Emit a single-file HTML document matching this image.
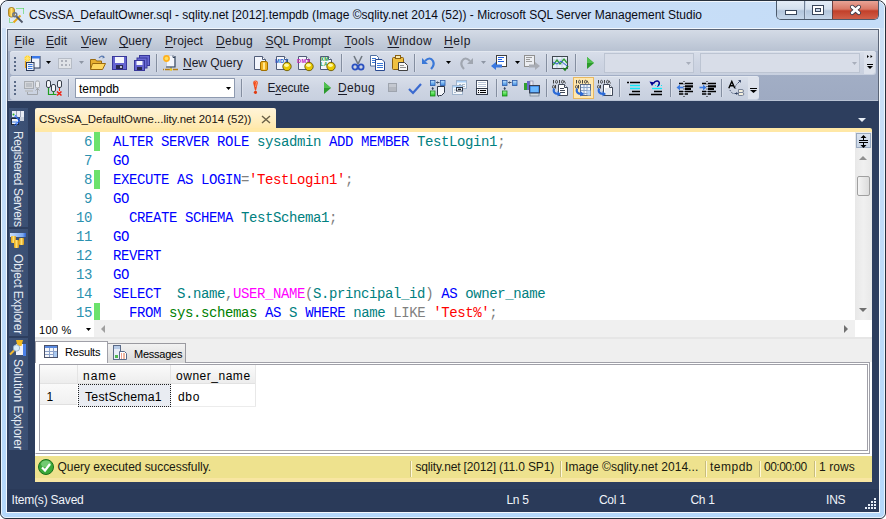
<!DOCTYPE html>
<html><head><meta charset="utf-8"><style>
*{margin:0;padding:0;box-sizing:border-box}
html,body{width:886px;height:519px;overflow:hidden;background:#fff}
body{position:relative;font-family:"Liberation Sans",sans-serif;font-size:12px;color:#000}
.a{position:absolute}
.t{position:absolute;white-space:nowrap;line-height:1}
svg{position:absolute;overflow:visible}
.navy{background-color:#2d3e5e}
.mono{font-family:"Liberation Mono",monospace}
.kw{color:#0000ff}.id{color:#008080}.op{color:#808080}.str{color:#ff0000}.fn{color:#ff00ff}.sys{color:#008000}
.ln{position:absolute;left:0;width:57px;text-align:right;color:#2b91af;font-size:14px;letter-spacing:-0.4px;line-height:19px;white-space:pre}
.cd{position:absolute;left:78px;font-size:14px;letter-spacing:-0.4px;line-height:19px;white-space:pre}
.mk{position:absolute;left:59px;width:6px;height:19px;background:#6ce26c}
.sep{position:absolute;width:1px;background:#848ea0;box-shadow:1px 0 0 rgba(240,244,250,0.35)}
.u{text-decoration:underline;text-underline-offset:2px}
.vt{position:absolute;white-space:nowrap;line-height:1;color:#e6ecf4;transform-origin:0 0;transform:rotate(90deg)}
.ssep{position:absolute;top:461px;width:2px;height:16px;border-left:1px solid #c8bc7c;border-right:1px solid #fff8d8}
</style></head><body>
<div class="a" style="left:0;top:0;width:886px;height:519px;background:#fff"></div>
<div class="a" style="left:0;top:0;width:886px;height:519px;border:1px solid #27303c;border-radius:8px 8px 6px 6px;background:linear-gradient(#d0e2f6 0,#c2dcf8 200px,#b4d8fb 519px)"></div>
<div class="a" style="left:1px;top:1px;width:884px;height:517px;border:1px solid rgba(255,255,255,0.7);border-radius:7px 7px 5px 5px"></div>
<div class="a" style="left:2px;top:2px;width:882px;height:26px;border-radius:6px 6px 0 0;background:linear-gradient(90deg,#dfeaf7 0,#d2e3f6 300px,#c8def7 600px,#c4dcf7 886px)"></div>
<div class="a" style="left:6px;top:28px;width:874px;height:485px;background:#f2f7fd"></div>
<div class="a" style="left:7px;top:29px;width:872px;height:483px;background:#5b6577"></div>
<div class="a" style="left:776px;top:1px;width:103px;height:19px;border:1px solid #4c5a6c;border-top:none;border-radius:0 0 5px 5px;overflow:hidden;background:#c8d6e8"><div class="a" style="left:0;top:0;width:28px;height:18px;background:linear-gradient(#e4edf7 0,#d3e0ee 45%,#b3c6dc 55%,#c6d7ea 100%)"></div><div class="a" style="left:27px;top:0;width:1px;height:19px;background:#6f7f94"></div><div class="a" style="left:29px;top:0;width:26px;height:18px;background:linear-gradient(#e4edf7 0,#d3e0ee 45%,#b3c6dc 55%,#c6d7ea 100%)"></div><div class="a" style="left:55px;top:0;width:1px;height:19px;background:#6f4040"></div><div class="a" style="left:56px;top:0;width:46px;height:18px;background:linear-gradient(#e8a496 0,#d97866 45%,#c2402a 55%,#d0604a 100%)"></div></div>
<svg style="left:785px;top:10px" width="12" height="5" viewBox="0 0 12 5"><rect x="0.5" y="0.5" width="11" height="4" fill="#fff" stroke="#39465a"/></svg>
<svg style="left:812px;top:5px" width="12" height="10" viewBox="0 0 12 10"><rect x="0.5" y="0.5" width="11" height="9" fill="#fff" stroke="#39465a"/><rect x="3.5" y="3.5" width="5" height="3" fill="#c8d6e8" stroke="#39465a"/></svg>
<svg style="left:850px;top:5px" width="11" height="10" viewBox="0 0 11 10"><path d="M2.2 2 L8.8 7.8 M8.8 2 L2.2 7.8" stroke="#3a3a48" stroke-width="4.4" stroke-linecap="round"/><path d="M2.2 2 L8.8 7.8 M8.8 2 L2.2 7.8" stroke="#fff" stroke-width="2.8" stroke-linecap="round"/></svg>
<svg style="left:7px;top:6px" width="18" height="18" viewBox="0 0 18 18"><defs><linearGradient id="cy" x1="0" x2="1"><stop offset="0" stop-color="#d89a10"/><stop offset="0.5" stop-color="#ffe27a"/><stop offset="1" stop-color="#d89a10"/></linearGradient></defs>
<rect x="1.5" y="1.5" width="6" height="9.5" rx="2.5" fill="url(#cy)" stroke="#a07818" stroke-width="0.8"/>
<path d="M9.5 2.5h7.5M16.5 2.5v5M2.5 12.5v4M2.5 16.5h4" stroke="#38d038" stroke-width="1" stroke-dasharray="1 1"/>
<path d="M6.5 16.5 L13.5 9.5" stroke="#e8a818" stroke-width="2"/><path d="M8.5 9.5 L15.5 16.5" stroke="#505868" stroke-width="1.8"/><circle cx="7.8" cy="8.8" r="2" fill="none" stroke="#6a7488" stroke-width="1.4"/></svg>
<div class="t" style="left:29px;top:9px;font-size:12px;color:#0a0a14;letter-spacing:-0.005px">CSvsSA_DefaultOwner.sql - sqlity.net [2012].tempdb (Image ©sqlity.net 2014 (52)) - Microsoft SQL Server Management Studio</div>
<div class="a" style="left:8px;top:30px;width:870px;height:71px;background:linear-gradient(#a8b4ca,#9eaac2)"></div>
<div class="a" style="left:8px;top:30px;width:870px;height:21px;background:linear-gradient(#d4dbe6,#b8c2d2)"></div>
<div class="a" style="left:8px;top:100px;width:870px;height:1px;background:#b8c2d4"></div>
<div class="a" style="left:10px;top:51px;width:866px;height:24px;background:linear-gradient(#d9dfea 0,#ced5e3 50%,#c8d0df 100%);border-radius:3px;box-shadow:inset 0 1px 0 #e3e8f0"></div>
<div class="a" style="left:10px;top:76px;width:749px;height:24px;background:linear-gradient(#d9dfea 0,#ced5e3 50%,#c8d0df 100%);border-radius:3px;box-shadow:inset 0 1px 0 #e3e8f0"></div>
<div class="t" style="left:14.5px;top:35px;font-size:12px;color:#1b1b28;letter-spacing:0.3px"><span class="u">F</span>ile</div>
<div class="t" style="left:46px;top:35px;font-size:12px;color:#1b1b28;letter-spacing:0.1px"><span class="u">E</span>dit</div>
<div class="t" style="left:81px;top:35px;font-size:12px;color:#1b1b28;letter-spacing:0px"><span class="u">V</span>iew</div>
<div class="t" style="left:119px;top:35px;font-size:12px;color:#1b1b28;letter-spacing:0px"><span class="u">Q</span>uery</div>
<div class="t" style="left:165px;top:35px;font-size:12px;color:#1b1b28;letter-spacing:0.1px"><span class="u">P</span>roject</div>
<div class="t" style="left:216px;top:35px;font-size:12px;color:#1b1b28;letter-spacing:0.3px"><span class="u">D</span>ebug</div>
<div class="t" style="left:265.5px;top:35px;font-size:12px;color:#1b1b28;letter-spacing:0px"><span class="u">S</span>QL Prompt</div>
<div class="t" style="left:344.5px;top:35px;font-size:12px;color:#1b1b28;letter-spacing:0.4px"><span class="u">T</span>ools</div>
<div class="t" style="left:387.5px;top:35px;font-size:12px;color:#1b1b28;letter-spacing:0.3px"><span class="u">W</span>indow</div>
<div class="t" style="left:444px;top:35px;font-size:12px;color:#1b1b28;letter-spacing:0.6px"><span class="u">H</span>elp</div>
<svg style="left:14px;top:57px" width="3" height="16" viewBox="0 0 3 16"><rect x="0" y="0" width="2" height="2" fill="#5a6a86"/><rect x="0" y="4" width="2" height="2" fill="#5a6a86"/><rect x="0" y="8" width="2" height="2" fill="#5a6a86"/><rect x="0" y="12" width="2" height="2" fill="#5a6a86"/></svg>
<svg style="left:14px;top:81px" width="3" height="16" viewBox="0 0 3 16"><rect x="0" y="0" width="2" height="2" fill="#5a6a86"/><rect x="0" y="4" width="2" height="2" fill="#5a6a86"/><rect x="0" y="8" width="2" height="2" fill="#5a6a86"/><rect x="0" y="12" width="2" height="2" fill="#5a6a86"/></svg>
<div class="sep" style="left:156px;top:54px;height:18px"></div>
<div class="sep" style="left:341px;top:54px;height:18px"></div>
<div class="sep" style="left:414px;top:54px;height:18px"></div>
<div class="sep" style="left:546px;top:54px;height:18px"></div>
<div class="sep" style="left:575px;top:54px;height:18px"></div>
<div class="sep" style="left:68px;top:79px;height:18px"></div>
<div class="sep" style="left:241px;top:79px;height:18px"></div>
<div class="sep" style="left:496px;top:79px;height:18px"></div>
<div class="sep" style="left:546px;top:79px;height:18px"></div>
<div class="sep" style="left:619px;top:79px;height:18px"></div>
<div class="sep" style="left:670px;top:79px;height:18px"></div>
<div class="sep" style="left:721px;top:79px;height:18px"></div>
<svg style="left:24px;top:55px" width="17" height="17" viewBox="0 0 17 17"><rect x="7.5" y="1.5" width="8.5" height="11.5" fill="#eef2fa" stroke="#2c3a58"/><rect x="8" y="1" width="8" height="2.5" fill="#3a78e8"/>
<circle cx="3.5" cy="3.5" r="3" fill="#ffd030"/><path d="M3.5 0v7M0 3.5h7M1 1l5 5M6 1l-5 5" stroke="#ffe880" stroke-width="0.7"/><path d="M1.5 6v7" stroke="#e8a010" stroke-width="1.2"/>
<rect x="2.5" y="7.5" width="7.5" height="8" fill="#eef2fa" stroke="#2c3a58"/><path d="M4 9.5h4.5M4 11.5h4.5M4 13.5h4.5" stroke="#3878e0" stroke-width="1.1"/></svg>
<svg style="left:46px;top:61px" width="5" height="3" viewBox="0 0 5 3"><path d="M0 0 H5 L2.5 3 Z" fill="#000"/></svg>
<svg style="left:57px;top:55px" width="16" height="16" viewBox="0 0 16 16"><rect x="1.5" y="3.5" width="13" height="10" fill="#e0e3e8" stroke="#b6bcc6"/><path d="M4 6h2M8 6h2M4 10h2M8 10h2M12 10h1" stroke="#9aa0aa" stroke-width="1.5"/></svg>
<svg style="left:79px;top:61px" width="5" height="3" viewBox="0 0 5 3"><path d="M0 0 H5 L2.5 3 Z" fill="#8e96a4"/></svg>
<svg style="left:90px;top:55px" width="16" height="16" viewBox="0 0 16 16"><path d="M0.5 4.5h5l1 1.5h5v8h-11z" fill="#e8b030" stroke="#9a6a10"/><path d="M2.5 8.5h13l-3 6h-12z" fill="#ffd860" stroke="#9a6a10"/>
<path d="M9 3 Q11 0 14 2" stroke="#5a7ab0" fill="none" stroke-width="1.2"/><path d="M13 0.5l2 2-2.5 1z" fill="#5a7ab0"/></svg>
<svg style="left:112px;top:55px" width="16" height="16" viewBox="0 0 16 16"><rect x="0.5" y="1.5" width="14" height="13" fill="#6464d0" stroke="#38389a"/><rect x="3" y="2" width="9" height="6" fill="#f4f6fc"/><rect x="4" y="10" width="7" height="4" fill="#2a2a50"/><rect x="8" y="11" width="2" height="2" fill="#c0c0d0"/></svg>
<svg style="left:134px;top:55px" width="16" height="16" viewBox="0 0 16 16"><rect x="5.5" y="0.5" width="10" height="10" fill="#6a6ad4" stroke="#38389a"/><rect x="3" y="3" width="10" height="10" fill="#6a6ad4" stroke="#38389a"/>
<rect x="0.5" y="5.5" width="10" height="10" fill="#6464d0" stroke="#38389a"/><rect x="2.5" y="6" width="6" height="4" fill="#f4f6fc"/><rect x="3" y="12" width="5" height="3" fill="#2a2a50"/></svg>
<svg style="left:161px;top:55px" width="18" height="17" viewBox="0 0 18 17"><path d="M5.5 0.5h7l1.5 1.5v9.5h-8.5z" fill="#f4f6fc" stroke="#c8d0e0"/><path d="M14 1v11h-9" stroke="#384860" stroke-width="1.2" fill="none"/><path d="M12 0.5v2h2" stroke="#384860" fill="none"/>
<circle cx="5.5" cy="3.5" r="3.4" fill="#ffb020"/><circle cx="5.5" cy="3.5" r="1.8" fill="#ffe060"/>
<path d="M2 14.5h15" stroke="#b88018" stroke-width="1.3" stroke-dasharray="1 1 5 1"/><path d="M10 12v2" stroke="#606060"/><circle cx="10" cy="14.5" r="1.3" fill="#f0d020"/></svg>
<div class="t" style="left:183px;top:57px;font-size:12px;color:#1b1b28;letter-spacing:-0.05px"><span class="u">N</span>ew Query</div>
<svg style="left:253px;top:55px" width="16" height="16" viewBox="0 0 16 16"><path d="M1.5 1.5h8l3 3v10h-11z" fill="#f4f6fc" stroke="#505c78"/><path d="M9.5 1.5v3h3" fill="#fff" stroke="#505c78"/><rect x="7.5" y="6.5" width="7" height="9" rx="1.5" fill="#f0b020" stroke="#a07000"/><rect x="10" y="7.5" width="2" height="7" fill="#ffe890"/></svg>
<svg style="left:275px;top:55px" width="16" height="16" viewBox="0 0 16 16"><path d="M1.5 1.5h8l3 3v10h-11z" fill="#f4f6fc" stroke="#505c78"/><path d="M9.5 1.5v3h3" fill="#fff" stroke="#505c78"/><text x="0" y="8" font-family="Liberation Sans" font-size="5.6" font-weight="bold" fill="#1a5cc8" letter-spacing="0.4">MDX</text>
<circle cx="12" cy="11.5" r="4.2" fill="#e8c800" stroke="#5a4a00" stroke-width="0.8"/><ellipse cx="11.5" cy="10.3" rx="2.4" ry="1.8" fill="#fff8a0"/></svg>
<svg style="left:297px;top:55px" width="16" height="16" viewBox="0 0 16 16"><path d="M1.5 1.5h8l3 3v10h-11z" fill="#f4f6fc" stroke="#505c78"/><path d="M9.5 1.5v3h3" fill="#fff" stroke="#505c78"/><text x="0" y="8" font-family="Liberation Sans" font-size="5.6" font-weight="bold" fill="#c020c0" letter-spacing="0.4">DMX</text>
<circle cx="12" cy="11.5" r="4.2" fill="#e8c800" stroke="#5a4a00" stroke-width="0.8"/><ellipse cx="11.5" cy="10.3" rx="2.4" ry="1.8" fill="#fff8a0"/></svg>
<svg style="left:319px;top:55px" width="16" height="16" viewBox="0 0 16 16"><path d="M1.5 1.5h8l3 3v10h-11z" fill="#f4f6fc" stroke="#505c78"/><path d="M9.5 1.5v3h3" fill="#fff" stroke="#505c78"/><text x="1.5" y="6" font-family="Liberation Sans" font-size="5" font-weight="bold" fill="#20a040" letter-spacing="0.5">XM</text><text x="1.5" y="11" font-family="Liberation Sans" font-size="5" font-weight="bold" fill="#20a040" letter-spacing="0.5">LA</text>
<circle cx="12" cy="11.5" r="4.2" fill="#e8c800" stroke="#5a4a00" stroke-width="0.8"/><ellipse cx="11.5" cy="10.3" rx="2.4" ry="1.8" fill="#fff8a0"/></svg>
<svg style="left:350px;top:55px" width="16" height="16" viewBox="0 0 16 16"><path d="M4 1 L8 9 M12 1 L8 9" stroke="#707880" stroke-width="1.6"/><circle cx="5" cy="12" r="2.6" fill="none" stroke="#2a50c0" stroke-width="1.8"/><circle cx="11" cy="12" r="2.6" fill="none" stroke="#2a50c0" stroke-width="1.8"/></svg>
<svg style="left:370px;top:55px" width="16" height="16" viewBox="0 0 16 16"><path d="M0.5 0.5h6l2 2v8.5h-8z" fill="#fff" stroke="#5070a0"/><path d="M2 3.5h4M2 5.5h4M2 7.5h4" stroke="#3a78d8"/>
<path d="M5.5 4.5h6.5l2.5 2.5v8.5h-9z" fill="#fff" stroke="#2a4a90"/><path d="M7 8.5h6M7 10.5h6M7 12.5h6" stroke="#3a78d8"/></svg>
<svg style="left:392px;top:55px" width="16" height="16" viewBox="0 0 16 16"><rect x="0.5" y="2.5" width="11" height="12" rx="1" fill="#f0c040" stroke="#8a6010"/><rect x="3.5" y="0.5" width="5" height="3" fill="#f8e8b0" stroke="#8a6010"/>
<path d="M6.5 7.5h6l3 3v5h-9z" fill="#f8f8f8" stroke="#404040"/><path d="M8 10.5h4M8 12.5h6" stroke="#909090"/></svg>
<svg style="left:422px;top:55px" width="16" height="16" viewBox="0 0 16 16"><path d="M3 6 Q8 1 11 6 Q13 10 9 14" fill="none" stroke="#3a78d8" stroke-width="2.2"/><path d="M0 3 L6 9 L0 9 Z" fill="#3a78d8"/></svg>
<svg style="left:446px;top:61px" width="5" height="3" viewBox="0 0 5 3"><path d="M0 0 H5 L2.5 3 Z" fill="#000"/></svg>
<svg style="left:457px;top:55px" width="16" height="16" viewBox="0 0 16 16"><path d="M13 6 Q8 1 5 6 Q3 10 7 14" fill="none" stroke="#a0a6b0" stroke-width="2.2"/><path d="M16 3 L10 9 L16 9 Z" fill="#a0a6b0"/></svg>
<svg style="left:481px;top:61px" width="5" height="3" viewBox="0 0 5 3"><path d="M0 0 H5 L2.5 3 Z" fill="#8e96a4"/></svg>
<svg style="left:491px;top:55px" width="16" height="16" viewBox="0 0 16 16"><rect x="5.5" y="0.5" width="10" height="11" fill="#fff" stroke="#404040"/><path d="M7 2.5h6M7 4.5h4M7 6.5h6" stroke="#2060e0"/>
<path d="M0 11 L5 7 V9.5 H11 V12.5 H5 V15 Z" fill="#3a78e0"/></svg>
<svg style="left:515px;top:61px" width="5" height="3" viewBox="0 0 5 3"><path d="M0 0 H5 L2.5 3 Z" fill="#000"/></svg>
<svg style="left:524px;top:55px" width="16" height="16" viewBox="0 0 16 16"><rect x="0.5" y="0.5" width="10" height="11" fill="#eceef2" stroke="#909090"/><path d="M2 2.5h6M2 4.5h4M2 6.5h6" stroke="#9a9a9a"/>
<path d="M16 11 L11 7 V9.5 H5 V12.5 H11 V15 Z" fill="#a8acb4"/></svg>
<svg style="left:552px;top:55px" width="16" height="16" viewBox="0 0 16 16"><rect x="0.5" y="1.5" width="15" height="12" fill="#e8f0f8" stroke="#404850"/><path d="M1 5h14M1 9h14M5 2v11M10 2v11" stroke="#a8c0d8" stroke-width="0.7"/>
<path d="M1 10 L5 5 L8 9 L12 4 L15 8" fill="none" stroke="#30a030" stroke-width="1.3"/><path d="M1 7 L5 9 L9 6 L15 11" fill="none" stroke="#3060d0" stroke-width="1"/><path d="M11 13 l2 2 3-4" stroke="#208020" stroke-width="1.6" fill="none"/></svg>
<svg style="left:586px;top:55px" width="9" height="16" viewBox="0 0 9 16"><path d="M1 2 L8 8 L1 14 Z" fill="#2c9a2c"/><path d="M1 2 L8 8 L1 8 Z" fill="#50c050"/></svg>
<div class="a" style="left:604px;top:53px;width:90px;height:20px;background:#d8dde8;border:1px solid #bcc4d2"></div>
<svg style="left:686px;top:62px" width="5" height="3" viewBox="0 0 5 3"><path d="M0 0 H5 L2.5 3 Z" fill="#a8aebb"/></svg>
<div class="a" style="left:700px;top:53px;width:160px;height:20px;background:#d8dde8;border:1px solid #bcc4d2"></div>
<svg style="left:852px;top:62px" width="5" height="3" viewBox="0 0 5 3"><path d="M0 0 H5 L2.5 3 Z" fill="#a8aebb"/></svg>
<div class="a" style="left:864px;top:52px;width:11px;height:22px;background:#dde2ec;border-radius:0 3px 3px 0"></div>
<svg style="left:867px;top:55px" width="6" height="15" viewBox="0 0 6 15"><path d="M0 0l2 1.5-2 1.5zM3.5 0l2 1.5-2 1.5z" fill="#000"/><path d="M0 9.5h6" stroke="#000"/><path d="M0 11h6L3 14z" fill="#000"/></svg>
<svg style="left:24px;top:80px" width="16" height="16" viewBox="0 0 16 16"><rect x="0.5" y="1.5" width="9" height="7" fill="#d4d6da" stroke="#a8acb2"/><rect x="2" y="3" width="6" height="4" fill="#bcc0c6"/><rect x="1" y="10" width="8" height="2" fill="#c0c4ca"/>
<rect x="11.5" y="1" width="4" height="7" rx="1.5" fill="#e8eaee" stroke="#a8acb2"/><path d="M13.5 8v6.5M3.5 12v2.5h10M11.5 10.5l2-2 2 2" stroke="#a0a4aa" fill="none"/></svg>
<svg style="left:46px;top:80px" width="16" height="16" viewBox="0 0 16 16"><rect x="0.5" y="0.5" width="4" height="7" rx="1.5" fill="#f4f6fa" stroke="#38404c"/><rect x="5.5" y="4.5" width="4" height="7" rx="1.5" fill="#f4f6fa" stroke="#38404c"/><rect x="11.5" y="0.5" width="4" height="7" rx="1.5" fill="#f4f6fa" stroke="#38404c"/>
<path d="M2.5 8v6.5h8M7.5 11.5v3" stroke="#20a020" stroke-width="1.2" fill="none"/><path d="M13.5 8v3" stroke="#f03010" stroke-width="1"/><path d="M11 11.5l4.5 4M15.5 11.5l-4.5 4" stroke="#f02010" stroke-width="1.6"/></svg>
<div class="a" style="left:75px;top:78px;width:160px;height:20px;background:#fff;border:1px solid #8e9ab0"></div>
<div class="t" style="left:79px;top:83px;font-size:12px;color:#000;">tempdb</div>
<svg style="left:226px;top:87px" width="5" height="3" viewBox="0 0 5 3"><path d="M0 0 H5 L2.5 3 Z" fill="#000"/></svg>
<svg style="left:252px;top:80px" width="8" height="16" viewBox="0 0 8 16"><path d="M1.2 3 Q1 0.5 3.5 0.5 Q6 0.5 5.8 3 L4 10.5 L3 10.5 Z" fill="#f04818"/><path d="M2.5 2 Q3.5 1 4.5 2 L3.6 7" stroke="#ff9a70" stroke-width="1" fill="none"/><circle cx="3.5" cy="12.3" r="1.6" fill="#e03a10"/></svg>
<div class="t" style="left:267.5px;top:82px;font-size:12px;color:#1b1b28;letter-spacing:-0.25px">E<span class="u">x</span>ecute</div>
<svg style="left:323px;top:80px" width="9" height="16" viewBox="0 0 9 16"><path d="M1 2 L8 8 L1 14 Z" fill="#2c9a2c"/><path d="M1 2 L8 8 L1 8 Z" fill="#50c050"/></svg>
<div class="t" style="left:338px;top:82px;font-size:12px;color:#1b1b28;letter-spacing:0.35px"><span class="u">D</span>ebug</div>
<svg style="left:388px;top:80px" width="10" height="16" viewBox="0 0 10 16"><rect x="0" y="3" width="9" height="9" fill="#9ea4ae"/><rect x="1" y="4" width="7" height="7" fill="#b4b8c0"/><rect x="1" y="4" width="7" height="3" fill="#c4c8d0"/></svg>
<svg style="left:408px;top:80px" width="14" height="16" viewBox="0 0 14 16"><path d="M1 9 L5 13 L13 4" fill="none" stroke="#3a6ad0" stroke-width="2.2"/></svg>
<svg style="left:430px;top:80px" width="16" height="16" viewBox="0 0 16 16"><defs><linearGradient id="gb" x1="0" y1="0" x2="0" y2="1"><stop offset="0" stop-color="#c0e4ff"/><stop offset="1" stop-color="#3a88e0"/></linearGradient><linearGradient id="gg" x1="0" y1="0" x2="0" y2="1"><stop offset="0" stop-color="#a0ffa0"/><stop offset="1" stop-color="#20c020"/></linearGradient></defs><rect x="0.5" y="0.5" width="4.5" height="5" fill="url(#gb)" stroke="#2a5aa8" stroke-width="0.8"/><rect x="10.5" y="0.5" width="4.5" height="5" fill="url(#gb)" stroke="#2a5aa8" stroke-width="0.8"/><rect x="0.5" y="11" width="4.5" height="5" fill="url(#gg)" stroke="#1a8a1a" stroke-width="0.8"/><path d="M6.5 2.5h3M7.5 1.5l-1 1 1 1M2.7 7v3M1.7 8.5h2" stroke="#304058" stroke-width="0.9" fill="none"/><path d="M7.5 6.5h7v6l-3 3h-2l-1 1v-1h-1z" fill="#f4f6fa" stroke="#303848"/></svg>
<svg style="left:452px;top:80px" width="16" height="16" viewBox="0 0 16 16"><rect x="4.5" y="0.5" width="10" height="8" fill="#f4f8fc" stroke="#a0b4cc"/><rect x="5" y="1" width="9" height="1.5" fill="#a8d0f8"/><path d="M7 4.5h2M10 4.5h3M7 6.5h2M10 6.5h3" stroke="#a8b8c8"/>
<rect x="0.5" y="5.5" width="10" height="9" fill="#f4f8fc" stroke="#a0b4cc"/><rect x="1" y="6" width="9" height="1.5" fill="#a8d0f8"/><path d="M2 10h2M2 12.5h2" stroke="#a8b8c8"/><rect x="4.5" y="7.5" width="6" height="3.5" fill="#e8eef6" stroke="#303848"/><path d="M6 9.3h3" stroke="#000" stroke-width="1.2"/></svg>
<svg style="left:476px;top:80px" width="13" height="16" viewBox="0 0 13 16"><rect x="0.5" y="0.5" width="11" height="14" fill="#fff" stroke="#4a5468"/><path d="M2 2.5h8M2 4.5h8M2 6.5h8" stroke="#b8c4d8"/><rect x="0.5" y="8.5" width="11" height="6" fill="#f0f2f6" stroke="#303848"/><path d="M2 10.5h1M4 10.5h6M2 12.5h1M4 12.5h6" stroke="#000" stroke-width="1"/></svg>
<svg style="left:502px;top:80px" width="16" height="16" viewBox="0 0 16 16"><defs><linearGradient id="gb2" x1="0" y1="0" x2="0" y2="1"><stop offset="0" stop-color="#c0e4ff"/><stop offset="1" stop-color="#3a88e0"/></linearGradient><linearGradient id="gg2" x1="0" y1="0" x2="0" y2="1"><stop offset="0" stop-color="#a0ffa0"/><stop offset="1" stop-color="#20c020"/></linearGradient></defs><rect x="0.5" y="0.5" width="4.5" height="5" fill="url(#gb2)" stroke="#2a5aa8" stroke-width="0.8"/><rect x="10.5" y="0.5" width="4.5" height="5" fill="url(#gb2)" stroke="#2a5aa8" stroke-width="0.8"/><rect x="0.5" y="11" width="4.5" height="5" fill="url(#gg2)" stroke="#1a8a1a" stroke-width="0.8"/><path d="M6.5 2.5h3M7.5 1.5l-1 1 1 1M2.7 7v3M1.7 8.5h2" stroke="#304058" stroke-width="0.9" fill="none"/></svg>
<svg style="left:524px;top:80px" width="16" height="16" viewBox="0 0 16 16"><rect x="0" y="3" width="3" height="7" fill="#30a030"/><rect x="3" y="1" width="3" height="9" fill="#6a6ac8"/><rect x="6" y="1" width="3" height="9" fill="#e8e8f0" stroke="#8080a0" stroke-width="0.6"/>
<rect x="5.5" y="5.5" width="10" height="7.5" fill="#2a70d0" stroke="#3a4050"/><rect x="6.5" y="6.5" width="8" height="5.5" fill="#6ab8ff"/><rect x="6" y="13.5" width="9" height="2.5" fill="#d0d8e0" stroke="#607080" stroke-width="0.6"/></svg>
<svg style="left:552px;top:80px" width="16" height="16" viewBox="0 0 16 16"><path d="M1.5 0v3.5M7.5 0v3.5M3.5 5v3.5" stroke="#303030" stroke-width="0.9"/><ellipse cx="4.5" cy="1.8" rx="1" ry="1.5" fill="none" stroke="#303030" stroke-width="0.8"/><ellipse cx="10.5" cy="1.8" rx="1" ry="1.5" fill="none" stroke="#303030" stroke-width="0.8"/><ellipse cx="1.5" cy="6.8" rx="1" ry="1.5" fill="none" stroke="#303030" stroke-width="0.8"/><path d="M12 0.5l1.5 3" stroke="#303030" stroke-width="0.8"/><path d="M6.5 4.5h6l3 3v8h-9z" fill="#fff" stroke="#404858"/><path d="M12.5 4.5v3h3" fill="#e8ecf2" stroke="#404858"/><path d="M8 8.5h4M8 10.5h5M8 12.5h5" stroke="#404858"/><path d="M2 8.5 Q0.5 13.5 6 14" stroke="#2a6ad8" stroke-width="2.2" fill="none"/><path d="M5.5 11l3.5 3-3.5 2.5z" fill="#2a6ad8"/></svg>
<div class="a" style="left:573px;top:77px;width:21px;height:22px;background:#ffe8b0;border:1px solid #e8b860"></div>
<svg style="left:575px;top:80px" width="16" height="16" viewBox="0 0 16 16"><path d="M1.5 0v3.5M7.5 0v3.5M3.5 5v3.5" stroke="#303030" stroke-width="0.9"/><ellipse cx="4.5" cy="1.8" rx="1" ry="1.5" fill="none" stroke="#303030" stroke-width="0.8"/><ellipse cx="10.5" cy="1.8" rx="1" ry="1.5" fill="none" stroke="#303030" stroke-width="0.8"/><ellipse cx="1.5" cy="6.8" rx="1" ry="1.5" fill="none" stroke="#303030" stroke-width="0.8"/><path d="M12 0.5l1.5 3" stroke="#303030" stroke-width="0.8"/><rect x="5.5" y="4.5" width="10" height="11" fill="#eef4fc" stroke="#5a6a88"/><path d="M6 7.5h9M6 10.5h9M6 13.5h9M9 5v10M12 5v10" stroke="#8aa4c8"/><rect x="12.5" y="10.5" width="3" height="5" fill="#b8d4f4"/><path d="M2 8.5 Q0.5 13.5 6 14" stroke="#2a6ad8" stroke-width="2.2" fill="none"/><path d="M5.5 11l3.5 3-3.5 2.5z" fill="#2a6ad8"/></svg>
<svg style="left:597px;top:80px" width="16" height="16" viewBox="0 0 16 16"><path d="M1.5 0v3.5M7.5 0v3.5M3.5 5v3.5" stroke="#303030" stroke-width="0.9"/><ellipse cx="4.5" cy="1.8" rx="1" ry="1.5" fill="none" stroke="#303030" stroke-width="0.8"/><ellipse cx="10.5" cy="1.8" rx="1" ry="1.5" fill="none" stroke="#303030" stroke-width="0.8"/><ellipse cx="1.5" cy="6.8" rx="1" ry="1.5" fill="none" stroke="#303030" stroke-width="0.8"/><path d="M12 0.5l1.5 3" stroke="#303030" stroke-width="0.8"/><path d="M6.5 4.5h6l3 3v8h-9z" fill="#fff" stroke="#404858"/><path d="M12.5 4.5v3h3" fill="#e8ecf2" stroke="#404858"/><path d="M8 8h6v7h-6z" fill="#e4e8ee"/><path d="M2 8.5 Q0.5 13.5 6 14" stroke="#2a6ad8" stroke-width="2.2" fill="none"/><path d="M5.5 11l3.5 3-3.5 2.5z" fill="#2a6ad8"/></svg>
<svg style="left:626px;top:80px" width="16" height="16" viewBox="0 0 16 16"><path d="M1 2.5h2M4 2.5h10M6 11.5h8M3 14.5h11" stroke="#000" stroke-width="1.3"/><path d="M4 5.5h10M4 8.5h10" stroke="#10e8f8" stroke-width="1.3"/></svg>
<svg style="left:649px;top:80px" width="16" height="16" viewBox="0 0 16 16"><path d="M4.5 3.5 Q6 0.5 8.5 1 Q11 1.8 10 4.5 Q9 6 8 6" fill="none" stroke="#000090" stroke-width="1.5"/><path d="M0.5 1.5l5 1-2.5 3.5z" fill="#000090"/><path d="M6 5.5h7" stroke="#10e8f8" stroke-width="1.2" stroke-dasharray="1 1"/><path d="M3 8.5h10" stroke="#10e8f8" stroke-width="1.3"/><path d="M5 11.5h8M2 14.5h11" stroke="#000" stroke-width="1.3"/></svg>
<svg style="left:676px;top:80px" width="18" height="17" viewBox="0 0 18 17"><path d="M3 3.5h4M9 3.5h8M3 11.5h4M9 11.5h8M3 14h4M9 14h3" stroke="#000" stroke-width="1.3"/><path d="M9 6.3h8M9 9h6" stroke="#000" stroke-width="2.2"/><path d="M8 1v16" stroke="#000" stroke-width="1" stroke-dasharray="1 1.5"/><path d="M0.5 7.5l3.5-3v6z" fill="#3a7ae0"/><path d="M3 7.5h4.5" stroke="#3a7ae0" stroke-width="1.6"/></svg>
<svg style="left:699px;top:80px" width="18" height="17" viewBox="0 0 18 17"><path d="M3 3.5h4M9 3.5h8M3 11.5h4M9 11.5h8M3 14h4M9 14h3" stroke="#000" stroke-width="1.3"/><path d="M9 6.3h8M9 9h6" stroke="#000" stroke-width="2.2"/><path d="M8 1v16" stroke="#000" stroke-width="1" stroke-dasharray="1 1.5"/><path d="M7.5 7.5l-3.5-3v6z" fill="#3a7ae0"/><path d="M0.5 7.5h4" stroke="#3a7ae0" stroke-width="1.6"/></svg>
<svg style="left:728px;top:80px" width="17" height="17" viewBox="0 0 17 17"><path d="M0.8 8.2 L3.8 1.5 L6.8 8.2 M2 5.8h3.6" stroke="#000" stroke-width="1.4" fill="none"/><path d="M10.5 9.5h3.5a1.5 1.5 0 0 1 0 3h-3.5zM10.5 12.5h3.8a1.5 1.5 0 0 1 0 3h-3.8z" fill="#f4f0e0" stroke="#7a8498" stroke-width="1"/>
<path d="M8.5 4.5 Q6.5 7 8 9" fill="none" stroke="#304060" stroke-dasharray="1 1"/><path d="M2 10 Q3.5 14 7 13.5" fill="none" stroke="#304060" stroke-dasharray="1 1"/><path d="M7 13.5h2.5M8.5 12.3l1.2 1.2-1.2 1.2" stroke="#304060" fill="none"/><path d="M9.5 3.5l3-3M10.5 0.5h2v2" stroke="#304060" fill="none" stroke-width="0.9"/></svg>
<div class="a" style="left:748px;top:77px;width:11px;height:22px;background:#dde2ec;border-radius:0 3px 3px 0"></div>
<svg style="left:750px;top:88px" width="7" height="6" viewBox="0 0 7 6"><path d="M0 0.5h7" stroke="#000"/><path d="M0 2h7L3.5 5z" fill="#000"/></svg>
<div class="a navy" style="left:7px;top:101px;width:872px;height:411px"></div>
<div class="a" style="left:9px;top:108px;width:19px;height:119px;background:linear-gradient(90deg,#3f5478,#3a4f73)"></div>
<div class="a" style="left:9px;top:229px;width:19px;height:107px;background:linear-gradient(90deg,#3f5478,#3a4f73)"></div>
<div class="a" style="left:9px;top:338px;width:19px;height:112px;background:linear-gradient(90deg,#3f5478,#3a4f73)"></div>
<svg style="left:10px;top:110px" width="16" height="17" viewBox="0 0 16 17"><rect x="2" y="1" width="12" height="6" fill="#e8ecf4"/><path d="M6.5 1v6M10.5 1v6" stroke="#9aa4b8"/><rect x="10" y="7" width="4" height="4" fill="#c8d0dc"/>
<rect x="1.5" y="8.5" width="7" height="6" fill="#eef2f8" stroke="#202838"/><path d="M2 12h5" stroke="#3a78e0"/><circle cx="3.5" cy="4.5" r="1" fill="#20b020"/>
<path d="M5 5.5 L9.5 10.5 L5 15.5" stroke="#2a70ff" stroke-width="2" fill="none" stroke-dasharray="1.2 0.6"/></svg>
<svg style="left:10px;top:232px" width="17" height="17" viewBox="0 0 17 17"><defs><linearGradient id="ob" x1="0" x2="1"><stop offset="0" stop-color="#c8dcf8"/><stop offset="0.8" stop-color="#7aa8f0"/><stop offset="1" stop-color="#2a60d0"/></linearGradient><linearGradient id="og" x1="0" x2="1"><stop offset="0" stop-color="#e0a010"/><stop offset="0.5" stop-color="#ffe070"/><stop offset="1" stop-color="#d09010"/></linearGradient></defs>
<rect x="0" y="1" width="16" height="4" fill="url(#ob)"/><rect x="1" y="4" width="5" height="7" rx="1" fill="url(#og)"/><rect x="9" y="6" width="5" height="7" rx="1" fill="url(#og)"/><rect x="4" y="8" width="5" height="8" rx="1" fill="url(#og)"/></svg>
<svg style="left:9px;top:339px" width="18" height="18" viewBox="0 0 18 18"><rect x="7" y="5" width="7" height="11" fill="#f0f2fa"/><rect x="14" y="5" width="3" height="12" fill="#4a80e8"/><path d="M7 1h7l-1.5 6h-4z" fill="#f0b820"/><circle cx="7.5" cy="9" r="3.2" fill="#d8ecf8" stroke="#90a8c0" stroke-width="0.8"/><path d="M5 11.5 L1 15.5" stroke="#f0b830" stroke-width="2"/></svg>
<div class="vt" style="left:24px;top:131px;font-size:12px;letter-spacing:-0.39px">Registered Servers</div>
<div class="vt" style="left:24px;top:254px;font-size:12px;letter-spacing:-0.18px">Object Explorer</div>
<div class="vt" style="left:24px;top:359px;font-size:12px;letter-spacing:-0.03px">Solution Explorer</div>
<div class="a" style="left:35px;top:108px;width:241px;height:21px;border-radius:2px 2px 0 0;background:linear-gradient(#fff4d8 0,#fff0c8 40%,#ffe8aa 100%)"></div>
<div class="a" style="left:35px;top:128px;width:837px;height:4px;background:#ffe8a6;border-radius:0 2px 0 0"></div>
<div class="t" style="left:39px;top:114px;font-size:11.45px;color:#1a1410;letter-spacing:-0.01px">CSvsSA_DefaultOwne...lity.net 2014 (52))</div>
<svg style="left:261px;top:115px" width="10" height="9" viewBox="0 0 10 9"><path d="M1 1 L9 8 M9 1 L1 8" stroke="#6a6048" stroke-width="1.4"/></svg>
<svg style="left:858px;top:118px" width="8" height="4" viewBox="0 0 8 4"><path d="M0 0 H8 L4 4 Z" fill="#e8eef6"/></svg>
<div class="a" style="left:35px;top:132px;width:837px;height:188px;background:#fff"></div>
<div class="a" style="left:35px;top:132px;width:17px;height:188px;background:#f0f0f0"></div>
<div class="a" style="left:35px;top:132px;width:820px;height:188px;overflow:hidden">
<div class="ln mono" style="top:1px">6</div>
<div class="mk" style="top:0px"></div>
<div class="cd mono" style="top:1px"><span class="kw">ALTER SERVER ROLE</span> <span class="id">sysadmin</span> <span class="kw">ADD MEMBER</span> <span class="id">TestLogin1</span><span class="op">;</span></div>
<div class="ln mono" style="top:20px">7</div>
<div class="cd mono" style="top:20px"><span class="kw">GO</span></div>
<div class="ln mono" style="top:39px">8</div>
<div class="mk" style="top:38px"></div>
<div class="cd mono" style="top:39px"><span class="kw">EXECUTE AS LOGIN</span><span class="op">=</span><span class="str">'TestLogin1'</span><span class="op">;</span></div>
<div class="ln mono" style="top:58px">9</div>
<div class="cd mono" style="top:58px"><span class="kw">GO</span></div>
<div class="ln mono" style="top:77px">10</div>
<div class="cd mono" style="top:77px">  <span class="kw">CREATE SCHEMA</span> <span class="id">TestSchema1</span><span class="op">;</span></div>
<div class="ln mono" style="top:96px">11</div>
<div class="cd mono" style="top:96px"><span class="kw">GO</span></div>
<div class="ln mono" style="top:115px">12</div>
<div class="cd mono" style="top:115px"><span class="kw">REVERT</span></div>
<div class="ln mono" style="top:134px">13</div>
<div class="cd mono" style="top:134px"><span class="kw">GO</span></div>
<div class="ln mono" style="top:153px">14</div>
<div class="cd mono" style="top:153px"><span class="kw">SELECT</span>  <span class="id">S.name</span><span class="op">,</span><span class="fn">USER_NAME</span><span class="op">(</span><span class="id">S.principal_id</span><span class="op">)</span> <span class="kw">AS</span> <span class="id">owner_name</span></div>
<div class="ln mono" style="top:172px">15</div>
<div class="mk" style="top:171px"></div>
<div class="cd mono" style="top:172px">  <span class="kw">FROM</span> <span class="sys">sys.schemas</span> <span class="kw">AS</span> <span class="id">S</span> <span class="kw">WHERE</span> <span class="id">name</span> <span class="op">LIKE</span> <span class="str">'Test%'</span><span class="op">;</span></div>
</div>
<div class="a" style="left:855px;top:132px;width:17px;height:188px;background:linear-gradient(90deg,#e8e8e8,#f0f0f0 50%,#e8e8e8)"></div>
<div class="a" style="left:856px;top:133px;width:15px;height:15px;background:linear-gradient(#dce4f0,#c8d4e4);border:1px solid #9aaac0"></div>
<svg style="left:858px;top:135px" width="11" height="13" viewBox="0 0 11 13"><path d="M1 5.5h9M1 7.5h9" stroke="#000"/><path d="M5.5 0l3 3h-6z M5.5 13l3-3h-6z" fill="#000"/><path d="M5.5 2v3M5.5 8v3" stroke="#000"/></svg>
<svg style="left:859px;top:156px" width="8" height="4" viewBox="0 0 8 4"><path d="M0 4 L4 0 L8 4 Z" fill="#909090"/></svg>
<div class="a" style="left:857px;top:176px;width:13px;height:20px;border:1px solid #a0a0a0;border-radius:2px;background:linear-gradient(90deg,#f4f4f4,#dcdcdc)"></div>
<svg style="left:859px;top:308px" width="8" height="4" viewBox="0 0 8 4"><path d="M0 0 L8 0 L4 4 Z" fill="#707070"/></svg>
<div class="a" style="left:35px;top:320px;width:820px;height:17px;background:#f0f0f0"></div>
<div class="a" style="left:855px;top:320px;width:17px;height:17px;background:#fff"></div>
<div class="a" style="left:35px;top:320px;width:59px;height:17px;background:#fff"></div>
<div class="t" style="left:39px;top:324.5px;font-size:11px;color:#000;letter-spacing:0.3px">100 %</div>
<svg style="left:86px;top:328px" width="5" height="3" viewBox="0 0 5 3"><path d="M0 0 H5 L2.5 3 Z" fill="#000"/></svg>
<svg style="left:101px;top:325px" width="5" height="8" viewBox="0 0 5 8"><path d="M4 0 L0 4 L4 8 Z" fill="#a0a0a0"/></svg>
<svg style="left:844px;top:325px" width="5" height="8" viewBox="0 0 5 8"><path d="M0 0 L4 4 L0 8 Z" fill="#707070"/></svg>
<div class="a" style="left:35px;top:337px;width:837px;height:25px;background:#efefef"></div>
<div class="a" style="left:35px;top:337px;width:837px;height:2px;background:#e6e6e6"></div>
<div class="a" style="left:35px;top:362px;width:837px;height:94px;background:#fff"></div>
<div class="a" style="left:35px;top:362px;width:835px;height:92px;border:1px solid #a0a0a8;border-left-color:#fff"></div>
<div class="a" style="left:107px;top:343px;width:79px;height:20px;border:1px solid #9a9aa0;border-bottom:none;background:linear-gradient(#f2f2f2,#dadada)"></div>
<div class="a" style="left:35px;top:341px;width:73px;height:22px;border:1px solid #a0a0a8;border-bottom:none;background:#fff"></div>
<svg style="left:44px;top:345px" width="14" height="14" viewBox="0 0 14 14"><rect x="0.5" y="0.5" width="13" height="12" fill="#f4f6fa" stroke="#4a5068"/><rect x="1" y="1" width="12" height="2" fill="#5a8ae0"/><path d="M1 6.5h12M1 9.5h12M5.5 3v9M9.5 3v9" stroke="#8aa0c8"/><rect x="10" y="7" width="3" height="5" fill="#a8c8f0"/></svg>
<div class="t" style="left:65px;top:347px;font-size:11px;color:#000;letter-spacing:-0.2px">Results</div>
<svg style="left:113px;top:345px" width="15" height="16" viewBox="0 0 15 16"><rect x="0.5" y="0.5" width="7" height="14" fill="#e8eef8" stroke="#5a6a88"/><rect x="1" y="1" width="6" height="3" fill="#b8cce8"/><path d="M6.5 6.5h5l2 2v6h-7z" fill="#fff" stroke="#5a6a88"/><path d="M8 9h1M8 11h1M8 13h1" stroke="#e04020"/><path d="M10 9h2M10 11h2M10 13h2" stroke="#e07040"/><rect x="2" y="10" width="3" height="3" fill="#50b850"/></svg>
<div class="t" style="left:134px;top:349px;font-size:11px;color:#000;letter-spacing:-0.25px">Messages</div>
<div class="a" style="left:39px;top:364px;width:829px;height:87px;border:1px solid #a0a0a8;background:#fff"></div>
<div class="a" style="left:40px;top:365px;width:216px;height:19px;background:linear-gradient(#fbfbfb,#f2f2f2 60%,#ececec)"></div>
<div class="a" style="left:40px;top:383px;width:216px;height:1px;background:#e2e2e2"></div>
<div class="a" style="left:77px;top:365px;width:1px;height:18px;background:#e4e4e4"></div>
<div class="a" style="left:170px;top:365px;width:1px;height:18px;background:#e4e4e4"></div>
<div class="a" style="left:255px;top:365px;width:1px;height:42px;background:#e8e8e8"></div>
<div class="t" style="left:83px;top:370px;font-size:12px;color:#000;letter-spacing:1.0px">name</div>
<div class="t" style="left:176px;top:370px;font-size:12px;color:#000;letter-spacing:0.52px">owner_name</div>
<div class="a" style="left:40px;top:384px;width:37px;height:21px;background:linear-gradient(#fafafa,#f0f0f0)"></div>
<div class="a" style="left:40px;top:404px;width:37px;height:1px;background:#e0e0e0"></div>
<div class="a" style="left:170px;top:406px;width:86px;height:1px;background:#ececec"></div>
<div class="a" style="left:78px;top:384px;width:93px;height:23px;border:1px dotted #202020;background:#e9ecf2"></div>
<div class="t" style="left:46.5px;top:391px;font-size:12px;color:#000;">1</div>
<div class="t" style="left:85px;top:391px;font-size:12.3px;color:#000;letter-spacing:0.22px">TestSchema1</div>
<div class="t" style="left:178px;top:391px;font-size:12px;color:#000;letter-spacing:0.7px">dbo</div>
<div class="a" style="left:35px;top:456px;width:837px;height:26px;background:#eee28e"></div>
<div class="a" style="left:35px;top:478px;width:837px;height:4px;background:#f8e6a2"></div>
<div class="a" style="left:7px;top:489px;width:872px;height:23px;background:#2a3a59"></div>
<svg style="left:38px;top:459px" width="16" height="16" viewBox="0 0 16 16"><circle cx="8" cy="8" r="7.5" fill="#3aa83a"/><circle cx="8" cy="8" r="7.5" fill="none" stroke="#1a701a"/><ellipse cx="8" cy="5" rx="5" ry="3.5" fill="#8ad88a" opacity="0.7"/><path d="M4 8.5 L7 11.5 L12 5" stroke="#fff" stroke-width="2.2" fill="none"/></svg>
<div class="t" style="left:57.5px;top:461px;font-size:12px;color:#1a1a10;letter-spacing:-0.06px">Query executed successfully.</div>
<div class="ssep" style="left:410px"></div>
<div class="ssep" style="left:560px"></div>
<div class="ssep" style="left:705px"></div>
<div class="ssep" style="left:759px"></div>
<div class="ssep" style="left:814px"></div>
<div class="t" style="left:415.5px;top:461px;font-size:12px;color:#1a1a10;letter-spacing:-0.16px">sqlity.net [2012] (11.0 SP1)</div>
<div class="t" style="left:565px;top:461px;font-size:12px;color:#1a1a10;letter-spacing:0.05px">Image ©sqlity.net 2014...</div>
<div class="t" style="left:710px;top:461px;font-size:12px;color:#1a1a10;letter-spacing:0.5px">tempdb</div>
<div class="t" style="left:764px;top:461px;font-size:12px;color:#1a1a10;letter-spacing:-0.5px">00:00:00</div>
<div class="t" style="left:819px;top:461px;font-size:12px;color:#1a1a10;letter-spacing:0.1px">1 rows</div>
<div class="t" style="left:11.5px;top:494px;font-size:12px;color:#f0f4fa;letter-spacing:-0.2px">Item(s) Saved</div>
<div class="t" style="left:506.5px;top:494px;font-size:12px;color:#f0f4fa;letter-spacing:-0.3px">Ln 5</div>
<div class="t" style="left:599px;top:494px;font-size:12px;color:#f0f4fa;letter-spacing:-0.3px">Col 1</div>
<div class="t" style="left:690.5px;top:494px;font-size:12px;color:#f0f4fa;letter-spacing:-0.3px">Ch 1</div>
<div class="t" style="left:826px;top:494px;font-size:12px;color:#f0f4fa;letter-spacing:-0.2px">INS</div>
<svg style="left:865px;top:498px" width="12" height="12" viewBox="0 0 12 12"><rect x="9" y="9" width="2" height="2" fill="#e8eef8"/><rect x="6" y="9" width="2" height="2" fill="#e8eef8"/><rect x="3" y="9" width="2" height="2" fill="#e8eef8"/><rect x="0" y="9" width="2" height="2" fill="#e8eef8"/><rect x="9" y="6" width="2" height="2" fill="#e8eef8"/><rect x="6" y="6" width="2" height="2" fill="#e8eef8"/><rect x="3" y="6" width="2" height="2" fill="#e8eef8"/><rect x="9" y="3" width="2" height="2" fill="#e8eef8"/><rect x="6" y="3" width="2" height="2" fill="#e8eef8"/><rect x="9" y="0" width="2" height="2" fill="#e8eef8"/></svg>
</body></html>
